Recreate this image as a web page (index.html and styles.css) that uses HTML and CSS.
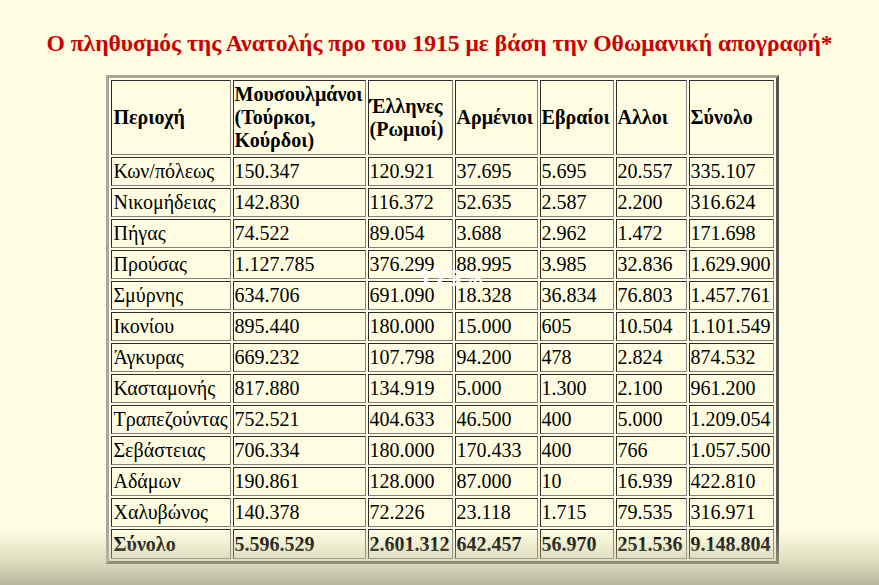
FILE: index.html
```html
<!DOCTYPE html>
<html>
<head>
<meta charset="utf-8">
<title>Πληθυσμός Ανατολής 1915</title>
<link rel="stylesheet" href="styles.css">
</head>
<body>
<h2 class="title">Ο πληθυσμός της Ανατολής προ του 1915 με βάση την Οθωμανική απογραφή*</h2>
<table class="census">
<thead>
<tr>
<th class="c1">Περιοχή</th>
<th class="c2">Μουσουλμάνοι (Τούρκοι, Κούρδοι)</th>
<th class="c3">Έλληνες (Ρωμιοί)</th>
<th class="c4">Αρμένιοι</th>
<th class="c5">Εβραίοι</th>
<th class="c6">Αλλοι</th>
<th class="c7">Σύνολο</th>
</tr>
</thead>
<tbody>
<tr><td>Κων/πόλεως</td><td>150.347</td><td>120.921</td><td>37.695</td><td>5.695</td><td>20.557</td><td>335.107</td></tr>
<tr><td>Νικομήδειας</td><td>142.830</td><td>116.372</td><td>52.635</td><td>2.587</td><td>2.200</td><td>316.624</td></tr>
<tr><td>Πήγας</td><td>74.522</td><td>89.054</td><td>3.688</td><td>2.962</td><td>1.472</td><td>171.698</td></tr>
<tr><td>Προύσας</td><td>1.127.785</td><td>376.299</td><td>88.995</td><td>3.985</td><td>32.836</td><td>1.629.900</td></tr>
<tr><td>Σμύρνης</td><td>634.706</td><td>691.090</td><td>18.328</td><td>36.834</td><td>76.803</td><td>1.457.761</td></tr>
<tr><td>Ικονίου</td><td>895.440</td><td>180.000</td><td>15.000</td><td>605</td><td>10.504</td><td>1.101.549</td></tr>
<tr><td>Άγκυρας</td><td>669.232</td><td>107.798</td><td>94.200</td><td>478</td><td>2.824</td><td>874.532</td></tr>
<tr><td>Κασταμονής</td><td>817.880</td><td>134.919</td><td>5.000</td><td>1.300</td><td>2.100</td><td>961.200</td></tr>
<tr><td>Τραπεζούντας</td><td>752.521</td><td>404.633</td><td>46.500</td><td>400</td><td>5.000</td><td>1.209.054</td></tr>
<tr><td>Σεβάστειας</td><td>706.334</td><td>180.000</td><td>170.433</td><td>400</td><td>766</td><td>1.057.500</td></tr>
<tr><td>Αδάμων</td><td>190.861</td><td>128.000</td><td>87.000</td><td>10</td><td>16.939</td><td>422.810</td></tr>
<tr><td>Χαλυβώνος</td><td>140.378</td><td>72.226</td><td>23.118</td><td>1.715</td><td>79.535</td><td>316.971</td></tr>
<tr class="total"><td>Σύνολο</td><td>5.596.529</td><td>2.601.312</td><td>642.457</td><td>56.970</td><td>251.536</td><td>9.148.804</td></tr>
</tbody>
</table>
<div class="zoom-badge">175%</div>
<div class="bottom-fade"></div>
</body>
</html>
```
FILE: styles.css
```css
html, body {
  margin: 0;
  padding: 0;
  background: #fffde1;
  height: 100%;
  overflow: hidden;
}
body {
  font-family: "Liberation Serif", "DejaVu Serif", serif;
  color: #000;
  position: relative;
}
.title {
  margin: 29px 0 0;
  text-align: center;
  color: #cc0000;
  font-family: "Liberation Serif", "DejaVu Serif", serif;
  font-size: 23.6px;
  font-weight: bold;
  line-height: 28px;
}
.census {
  margin: 18px auto 0;
  border: 3px outset #a8a8a0;
  border-spacing: 2px;
  font-family: "Liberation Serif", "DejaVu Serif", serif;
  font-size: 20px;
  line-height: 23px;
  position: relative;
  left: 3px;
}
.census th,
.census td {
  border: 1px inset #808080;
  padding: 2px 2px 2px 1px;
  text-align: left;
  white-space: nowrap;
}
.census tbody td {
  padding-top: 2px;
  padding-bottom: 2px;
  height: 23px;
}
.census .total td {
  height: 24px;
}
.census th {
  white-space: normal;
  vertical-align: middle;
  font-weight: bold;
  line-height: 23px;
}
.census .c1 { width: 114px; }
.census .c2 { width: 128px; }
.census .c3 { width: 80px; }
.census .c4 { width: 78px; }
.census .c5 { width: 69px; }
.census .c6 { width: 66px; }
.census .c7 { width: 79px; }
.total td {
  font-weight: bold;
}
.zoom-badge {
  position: absolute;
  left: 418px;
  top: 266px;
  color: rgba(255, 255, 255, 0.92);
  font-family: "DejaVu Sans", sans-serif;
  font-weight: bold;
  font-size: 21px;
  line-height: 26px;
}
.bottom-fade {
  position: absolute;
  left: 0;
  right: 0;
  bottom: 0;
  height: 55px;
  background: linear-gradient(to bottom, rgba(200, 200, 170, 0) 0%, rgba(190, 190, 160, 0.55) 60%, rgba(175, 175, 150, 0.9) 100%);
  pointer-events: none;
}
```
